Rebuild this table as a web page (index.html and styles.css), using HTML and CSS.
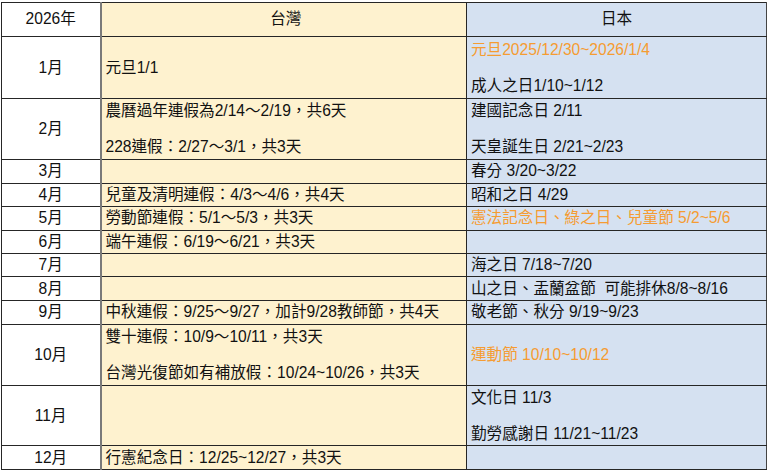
FILE: index.html
```html
<!DOCTYPE html>
<html lang="zh-Hant">
<head>
<meta charset="utf-8">
<title>2026 假期</title>
<link rel="stylesheet" href="styles.css">
</head>
<body>
<table class="cal">
  <colgroup>
    <col class="c-month">
    <col class="c-tw">
    <col class="c-jp">
  </colgroup>
  <tr class="r-head">
    <th class="month">2026年</th>
    <th class="tw">台灣</th>
    <th class="jp">日本</th>
  </tr>
  <tr class="r-1">
    <td class="month">1月</td>
    <td class="tw">元旦1/1</td>
    <td class="jp"><span class="hl">元旦2025/12/30~2026/1/4</span><br><br>成人之日1/10~1/12</td>
  </tr>
  <tr class="r-2">
    <td class="month">2月</td>
    <td class="tw">農曆過年連假為2/14～2/19，共6天<br><br>228連假：2/27～3/1，共3天</td>
    <td class="jp">建國記念日 2/11<br><br>天皇誕生日 2/21~2/23</td>
  </tr>
  <tr class="r-3">
    <td class="month">3月</td>
    <td class="tw"></td>
    <td class="jp">春分 3/20~3/22</td>
  </tr>
  <tr class="r-s">
    <td class="month">4月</td>
    <td class="tw">兒童及清明連假：4/3～4/6，共4天</td>
    <td class="jp">昭和之日 4/29</td>
  </tr>
  <tr class="r-s">
    <td class="month">5月</td>
    <td class="tw">勞動節連假：5/1～5/3，共3天</td>
    <td class="jp"><span class="hl">憲法記念日、綠之日、兒童節 5/2~5/6</span></td>
  </tr>
  <tr class="r-s">
    <td class="month">6月</td>
    <td class="tw">端午連假：6/19～6/21，共3天</td>
    <td class="jp"></td>
  </tr>
  <tr class="r-s">
    <td class="month">7月</td>
    <td class="tw"></td>
    <td class="jp">海之日 7/18~7/20</td>
  </tr>
  <tr class="r-s">
    <td class="month">8月</td>
    <td class="tw"></td>
    <td class="jp">山之日、盂蘭盆節&nbsp; 可能排休8/8~8/16</td>
  </tr>
  <tr class="r-9">
    <td class="month">9月</td>
    <td class="tw">中秋連假：9/25～9/27，加計9/28教師節，共4天</td>
    <td class="jp">敬老節、秋分 9/19~9/23</td>
  </tr>
  <tr class="r-10">
    <td class="month">10月</td>
    <td class="tw">雙十連假：10/9～10/11，共3天<br><br>台灣光復節如有補放假：10/24~10/26，共3天</td>
    <td class="jp"><span class="hl">運動節 10/10~10/12</span></td>
  </tr>
  <tr class="r-11">
    <td class="month">11月</td>
    <td class="tw"></td>
    <td class="jp">文化日 11/3<br><br>勤勞感謝日 11/21~11/23</td>
  </tr>
  <tr class="r-12">
    <td class="month">12月</td>
    <td class="tw">行憲紀念日：12/25~12/27，共3天</td>
    <td class="jp"></td>
  </tr>
</table>
</body>
</html>
```

FILE: styles.css
```css
html, body {
  margin: 0;
  padding: 0;
  background: #ffffff;
}

body {
  font-family: "Liberation Sans", "Noto Sans CJK TC", sans-serif;
  font-size: 15.6px;
  color: #111111;
}

.cal {
  margin: 1.5px 0 0 1px;
  border-collapse: collapse;
  table-layout: fixed;
  width: 765px;
  border: 1px solid #555555;
}

.c-month { width: 99px; }
.c-tw { width: 366px; }
.c-jp { width: 300px; }

.cal th,
.cal td {
  border: 1px solid #262626;
  padding: 0 4px;
  line-height: 18px;
  vertical-align: middle;
  font-weight: normal;
  text-align: left;
  white-space: nowrap;
  overflow: hidden;
}

.cal .month {
  text-align: center;
  background: #ffffff;
  border-right: 2px solid #7a7a7a;
}

.cal .tw {
  background: #fef2cf;
}

.cal .jp {
  background: #d5e1f1;
  border-right: 1px solid #444444;
}

.cal th.tw,
.cal th.jp {
  text-align: center;
}

.cal th.tw {
  padding-right: 0;
}

.hl {
  color: #f59c32;
}

.r-head { height: 34.5px; }
.r-1 { height: 62px; }
.r-2 { height: 61px; }
.r-3 { height: 23.8px; }
.r-s { height: 23.4px; }
.r-9 { height: 24px; }
.r-10 { height: 61px; }
.r-11 { height: 60.7px; }
.r-12 { height: 23.6px; }
```
